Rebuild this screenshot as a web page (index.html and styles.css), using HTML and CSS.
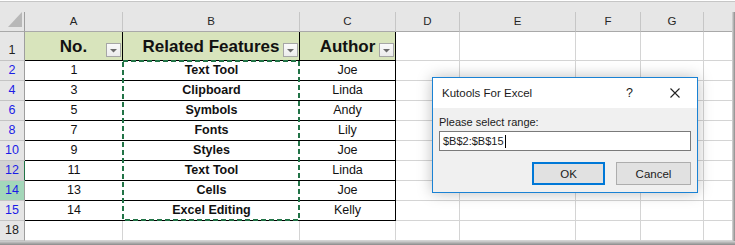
FILE: index.html
```html
<!DOCTYPE html>
<html>
<head>
<meta charset="utf-8">
<link rel="stylesheet" href="styles.css">
</head>
<body>
<div class="sheet">
  <div class="topband"></div>
  <div class="main">
    <div class="grid">
      <div class="ch corner"><svg width="14" height="15" viewBox="0 0 14 15"><polygon points="14,0 14,15 0,15" fill="#b8b8b8"/></svg></div>
      <div class="ch">A</div><div class="ch">B</div><div class="ch">C</div><div class="ch">D</div><div class="ch">E</div><div class="ch">F</div><div class="ch">G</div><div class="ch last"></div>

      <div class="rh r1">1</div>
      <div class="hd"><span class="ht">No.</span><span class="fb"><svg width="13" height="12" viewBox="0 0 13 12"><polygon points="3,5 10,5 6.5,8.5" fill="#6a6a6a"/></svg></span></div>
      <div class="hd"><span class="ht">Related Features</span><span class="fb"><svg width="13" height="12" viewBox="0 0 13 12"><polygon points="3,5 10,5 6.5,8.5" fill="#6a6a6a"/></svg></span></div>
      <div class="hd"><span class="ht">Author</span><span class="fb"><svg width="13" height="12" viewBox="0 0 13 12"><polygon points="3,5 10,5 6.5,8.5" fill="#6a6a6a"/></svg></span></div>
      <div class="gc"></div><div class="gc"></div><div class="gc"></div><div class="gc"></div><div class="gc last"></div>

      <div class="rh f">2</div><div class="td">1</div><div class="td b">Text Tool</div><div class="td c">Joe</div>
      <div class="gc"></div><div class="gc"></div><div class="gc"></div><div class="gc"></div><div class="gc last"></div>

      <div class="rh f">4</div><div class="td">3</div><div class="td b">Clipboard</div><div class="td c">Linda</div>
      <div class="gc"></div><div class="gc"></div><div class="gc"></div><div class="gc"></div><div class="gc last"></div>

      <div class="rh f">6</div><div class="td">5</div><div class="td b">Symbols</div><div class="td c">Andy</div>
      <div class="gc"></div><div class="gc"></div><div class="gc"></div><div class="gc"></div><div class="gc last"></div>

      <div class="rh f">8</div><div class="td">7</div><div class="td b">Fonts</div><div class="td c">Lily</div>
      <div class="gc"></div><div class="gc"></div><div class="gc"></div><div class="gc"></div><div class="gc last"></div>

      <div class="rh f">10</div><div class="td">9</div><div class="td b">Styles</div><div class="td c">Joe</div>
      <div class="gc"></div><div class="gc"></div><div class="gc"></div><div class="gc"></div><div class="gc last"></div>

      <div class="rh f act">12</div><div class="td">11</div><div class="td b">Text Tool</div><div class="td c">Linda</div>
      <div class="gc"></div><div class="gc"></div><div class="gc"></div><div class="gc"></div><div class="gc last"></div>

      <div class="rh f hl">14</div><div class="td">13</div><div class="td b">Cells</div><div class="td c">Joe</div>
      <div class="gc"></div><div class="gc"></div><div class="gc"></div><div class="gc"></div><div class="gc last"></div>

      <div class="rh f">15</div><div class="td">14</div><div class="td b">Excel Editing</div><div class="td c">Kelly</div>
      <div class="gc"></div><div class="gc"></div><div class="gc"></div><div class="gc"></div><div class="gc last"></div>

      <div class="rh">18</div><div class="gc"></div><div class="gc"></div><div class="gc"></div>
      <div class="gc"></div><div class="gc"></div><div class="gc"></div><div class="gc"></div><div class="gc last"></div>

      <div class="sel"><svg width="178" height="161" viewBox="0 0 178 161"><rect x="1" y="1" width="176" height="159" fill="none" stroke="#217346" stroke-width="2" stroke-dasharray="5 3"/></svg></div>
    </div>
    <div class="vframe"></div>
  </div>
  <div class="hframe"></div>

  <div class="dialog">
    <div class="dtitle">
      <span class="dname">Kutools For Excel</span>
      <span class="dq">?</span>
      <svg class="dx" width="10" height="10" viewBox="0 0 10 10"><path d="M0.5 0.5 L9.5 9.5 M9.5 0.5 L0.5 9.5" stroke="#222" stroke-width="1.1" fill="none"/></svg>
    </div>
    <div class="dbody">
      <div class="dlabel">Please select range:</div>
      <div class="dinput">$B$2:$B$15<span class="caret"></span></div>
      <div class="dbtns">
        <div class="btn ok">OK</div>
        <div class="btn cancel">Cancel</div>
      </div>
    </div>
  </div>
</div>
</body>
</html>
```
FILE: styles.css
```css
body {
  margin: 0;
  background: #fff;
  font-family: "Liberation Sans", Arial, sans-serif;
}
.sheet {
  position: relative;
  width: 735px;
  height: 245px;
  overflow: hidden;
  background: #fff;
}
.topband {
  height: 10px;
  margin-top: 1px;
  border-top: 1px solid #c6c6c6;
  background: #e6e6e6;
}
.main {
  display: flex;
  height: 229px;
}
.grid {
  position: relative;
  display: grid;
  width: 732px;
  grid-template-columns: 25px 98px 177px 96px 64px 116px 65px 63px 28px;
  grid-template-rows: 20px 29px repeat(9, 20px);
}
.grid > div {
  box-sizing: border-box;
}
.vframe {
  width: 3px;
  background: linear-gradient(90deg, #d8d8d8, #8c8c8c);
}
.hframe {
  height: 4px;
  background: linear-gradient(#d2d2d2, #8a8a8a);
}

/* column headers */
.ch {
  background: #e6e6e6;
  border-right: 1px solid #c6c6c6;
  border-bottom: 1px solid #a9a9a9;
  text-align: center;
  font-size: 11.5px;
  line-height: 19px;
  color: #262626;
}
.ch.corner {
  border-right: 1px solid #9e9e9e;
  display: flex;
  justify-content: flex-end;
  align-items: flex-end;
  padding: 0 2px 4px 0;
}
.ch.last {
  border-right: none;
}

/* row headers */
.rh {
  background: #e6e6e6;
  border-right: 1px solid #9e9e9e;
  border-bottom: 1px solid #c4c4c4;
  display: flex;
  justify-content: center;
  align-items: flex-end;
  font-size: 12.5px;
  line-height: 19px;
  color: #222;
}
.rh.f {
  color: #1c1ce6;
}
.rh.act {
  background: #d2d2d2;
  border-right: 1px solid #217346;
}
.rh.hl {
  background: #a3d7b9;
}

/* table header */
.hd {
  background: #d8e4bc;
  border-right: 1px solid #000;
  border-bottom: 1px solid #000;
  display: grid;
  align-items: end;
}
.ht {
  grid-area: 1 / 1;
  justify-self: center;
  padding-bottom: 3px;
  font-weight: bold;
  font-size: 17px;
  line-height: 20px;
  color: #111;
}
.fb {
  grid-area: 1 / 1;
  justify-self: end;
  margin: 0 1px 3px 0;
  width: 15px;
  height: 14px;
  box-sizing: border-box;
  border: 1px solid #a6a6a6;
  background: linear-gradient(#fafafa, #ececec);
  display: flex;
}

/* table data */
.td {
  border-bottom: 1px solid #000;
  display: flex;
  justify-content: center;
  align-items: flex-end;
  font-size: 12.5px;
  line-height: 19px;
  color: #111;
}
.td.b {
  font-weight: bold;
}
.td.c {
  border-right: 1px solid #000;
}

/* plain grid cells */
.gc {
  border-right: 1px solid #d4d4d4;
  border-bottom: 1px solid #d4d4d4;
}
.gc.last {
  border-right: none;
}

/* selection marquee */
.sel {
  position: absolute;
  grid-column: 3;
  grid-row: 3 / span 8;
  top: -1px;
  left: -1px;
  width: 178px;
  height: 161px;
  display: flex;
}

/* dialog */
.dialog {
  position: absolute;
  left: 432px;
  top: 77px;
  width: 266px;
  height: 116px;
  box-sizing: border-box;
  border: 1px solid #1a82d4;
  background: #f0f0f0;
  box-shadow: 0 0 14px rgba(0, 0, 0, 0.26);
  display: flex;
  flex-direction: column;
  font-size: 11.5px;
  color: #1b1b1b;
}
.dtitle {
  height: 30px;
  background: #fff;
  display: flex;
  align-items: center;
  padding-left: 9px;
}
.dname {
  line-height: 30px;
}
.dq {
  margin-left: auto;
  margin-right: 37px;
  font-size: 12.5px;
  line-height: 30px;
}
.dx {
  margin-right: 17px;
}
.dbody {
  flex: 1;
  display: flex;
  flex-direction: column;
  padding: 8px 0 0 6px;
}
.dlabel {
  font-size: 11px;
  line-height: 13px;
}
.dinput {
  margin-top: 2px;
  width: 252px;
  height: 20px;
  box-sizing: border-box;
  border: 1px solid #7a7a7a;
  background: #fff;
  padding-left: 3px;
  font-size: 11px;
  line-height: 18px;
  display: flex;
  align-items: center;
}
.caret {
  width: 1px;
  height: 13px;
  background: #000;
  margin-left: 1px;
}
.dbtns {
  margin-top: 11px;
  display: flex;
  justify-content: flex-end;
  gap: 11px;
  padding-right: 6px;
}
.btn {
  height: 23px;
  box-sizing: border-box;
  background: #e1e1e1;
  border: 1px solid #adadad;
  display: flex;
  align-items: center;
  justify-content: center;
  font-size: 11.5px;
}
.btn.ok {
  width: 73px;
  border: 2px solid #0078d7;
}
.btn.cancel {
  width: 75px;
}
```
